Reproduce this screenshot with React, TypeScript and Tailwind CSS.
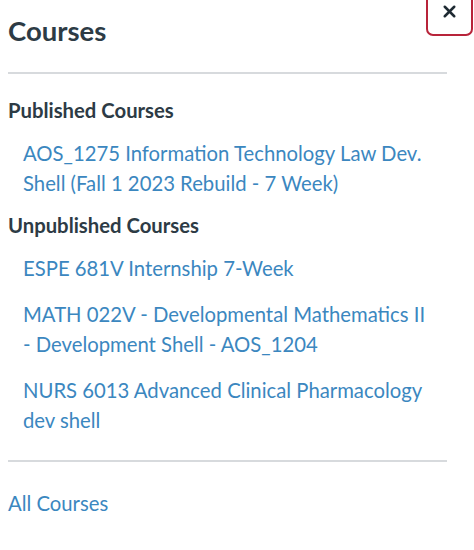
import { X } from "lucide-react";

const published = ["AOS_1275 Information Technology Law Dev. Shell (Fall 1 2023 Rebuild - 7 Week)"];

const unpublished = [
  "ESPE 681V Internship 7-Week",
  "MATH 022V - Developmental Mathematics II - Development Shell - AOS_1204",
  "NURS 6013 Advanced Clinical Pharmacology dev shell",
];

const CourseList = ({ items }: { items: string[] }) => (
  <ul className="flex flex-col gap-4 mt-[14px] pl-[15px] pr-[12px]">
    {items.map((c) => (
      <li key={c}>
        <a href="#" className="text-[20.3px] leading-[30px] text-[#3b87bf] block">
          {c}
        </a>
      </li>
    ))}
  </ul>
);

export default function App() {
  return (
    <div
      className="relative w-[474px] h-[550px] bg-white overflow-hidden"
      style={{ fontFamily: "Lato, 'Noto Sans', sans-serif" }}
    >
      <button className="absolute right-[1px] top-[-12px] w-[47px] h-[48px] border-2 border-[#b8243a] rounded-[7px] flex items-end justify-center pb-[13px] text-[#1f2b33]">
        <X size={19} strokeWidth={3.2} />
      </button>

      <div className="w-[447px] pl-2">
        <h1 className="pt-[13px] text-[27.5px] leading-[36px] font-bold text-[#2d3b45]">Courses</h1>
        <div className="mt-[23px] h-[2px] bg-[#d7dadd]" />

        <h2 className="mt-[22px] text-[20.3px] leading-[28px] font-bold text-[#2d3b45]">Published Courses</h2>
        <CourseList items={published} />

        <h2 className="mt-[13px] text-[20.3px] leading-[28px] font-bold text-[#2d3b45]">Unpublished Courses</h2>
        <CourseList items={unpublished} />

        <div className="mt-[25px] h-[2px] bg-[#d7dadd]" />
        <a href="#" className="block mt-[26px] text-[20.3px] leading-[30px] text-[#3b87bf]">
          All Courses
        </a>
      </div>
    </div>
  );
}
